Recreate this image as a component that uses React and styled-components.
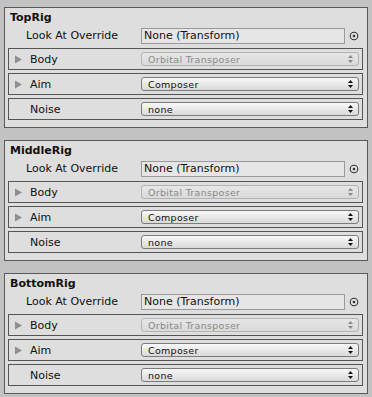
import styled, { createGlobalStyle } from "styled-components";

const GlobalStyle = createGlobalStyle`
    html, body {
        margin: 0;
        padding: 0;
        background: #c2c2c2;
    }
    body {
        font-family: "DejaVu Sans", Verdana, sans-serif;
        font-size: 11px;
        color: #111111;
    }
`;

const rigs = ["TopRig", "MiddleRig", "BottomRig"];

const Triangle = () => (
    <svg width="9" height="9" viewBox="0 0 9 9">
        <path d="M1 0.5 L8 4.5 L1 8.5 Z" fill="#8e8e8e" />
    </svg>
);

const UpDown = () => (
    <svg width="5" height="8" viewBox="0 0 5 8">
        <path d="M2.5 0 L5 3 L0 3 Z" fill="currentColor" />
        <path d="M2.5 8 L5 5 L0 5 Z" fill="currentColor" />
    </svg>
);

const Picker = () => (
    <svg width="10" height="10" viewBox="0 0 10 10">
        <circle cx="5" cy="5" r="3.8" fill="none" stroke="#333" strokeWidth="1.1" />
        <circle cx="5" cy="5" r="1.3" fill="#333" />
    </svg>
);

const Stage = ({ name, disabled, foldout, children }) => (
    <StageRow>
        <Fold>{foldout && <Triangle />}</Fold>
        <StageLabel>{name}</StageLabel>
        <Popup $disabled={disabled}>
            <span>{children}</span>
            <UpDown />
        </Popup>
    </StageRow>
);

const Rig = ({ name }) => (
    <Group>
        <Title>{name}</Title>
        <OverrideRow>
            <OverrideLabel>Look At Override</OverrideLabel>
            <ObjectField>None (Transform)</ObjectField>
            <PickerSlot>
                <Picker />
            </PickerSlot>
        </OverrideRow>
        <Stage name="Body" foldout disabled>Orbital Transposer</Stage>
        <Stage name="Aim" foldout>Composer</Stage>
        <Stage name="Noise">none</Stage>
    </Group>
);

const App = () => (
    <>
        <GlobalStyle />
        <Page>
            {rigs.map((r) => (
                <Rig key={r} name={r} />
            ))}
        </Page>
    </>
);

const Page = styled.div`
    display: flex;
    flex-direction: column;
    gap: 12px;
    padding: 7px 4px 0 4px;
`;

const Group = styled.div`
    display: flex;
    flex-direction: column;

    width: 364px;
    box-sizing: border-box;
    height: 121px;
    padding: 0 4px 0 3px;

    border: 1px solid #5a5a5a;
    background-color: #dedede;
`;

const Title = styled.div`
    height: 17px;
    margin-top: 1px;
    padding-left: 2px;

    font-weight: bold;
    font-size: 11px;
    line-height: 17px;
`;

const OverrideRow = styled.div`
    display: flex;
    align-items: center;
    height: 19px;
`;

const OverrideLabel = styled.span`
    width: 115px;
    padding-left: 18px;
    font-size: 11px;
`;

const ObjectField = styled.div`
    box-sizing: border-box;
    width: 204px;
    height: 16px;
    padding-left: 2px;

    border: 1px solid #9a9a9a;
    background-color: #e6e6e6;

    font-size: 11px;
    line-height: 14px;
`;

const PickerSlot = styled.span`
    display: flex;
    align-items: center;
    justify-content: center;
    flex: 1;
`;

const StageRow = styled.div`
    display: flex;
    align-items: center;
    box-sizing: border-box;
    height: 22px;
    margin-top: 3px;

    border: 1px solid #555555;
    background-color: #dedede;
`;

const Fold = styled.span`
    display: flex;
    align-items: center;
    width: 21px;
    padding-left: 5px;
    box-sizing: border-box;
`;

const StageLabel = styled.span`
    width: 111px;
    font-size: 11px;
`;

const Popup = styled.div`
    display: flex;
    align-items: center;
    justify-content: space-between;

    flex: 1;
    box-sizing: border-box;
    height: 14px;
    margin-right: 3px;
    padding: 0 5px 0 6px;

    border: 1px solid ${(p) => (p.$disabled ? "#b4b4b4" : "#7c7c7c")};
    border-radius: 3px;
    background: ${(p) =>
        p.$disabled
            ? "linear-gradient(#e6e6e6, #dadada)"
            : "linear-gradient(#f8f8f8, #d9d9d9)"};

    font-size: 9.5px;
    letter-spacing: 0.3px;
    color: ${(p) => (p.$disabled ? "#8a8a8a" : "#111111")};
`;

export default App;
